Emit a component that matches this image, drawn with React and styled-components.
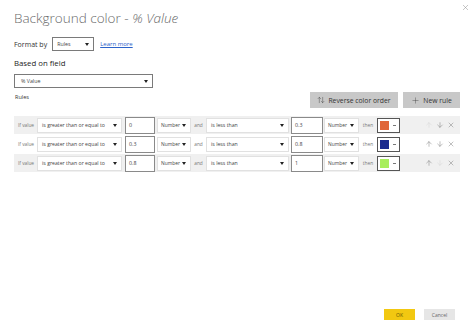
import React from 'react';
import styled, { createGlobalStyle } from 'styled-components';
import { ArrowUp, ArrowDown, X, ArrowUpDown, Plus } from 'lucide-react';

const Global = createGlobalStyle`
  html, body {
    margin: 0;
    padding: 0;
    background: #ffffff;
  }
  body {
    font-family: 'Open Sans', 'Noto Sans', sans-serif;
    color: #333;
  }
`;

const Dialog = styled.div`
  width: 474px;
  height: 335px;
  box-sizing: border-box;
  padding: 0 14px 15px 14px;
  display: flex;
  flex-direction: column;
  background: #fff;
  white-space: nowrap;
`;

const Header = styled.header`
  display: flex;
  justify-content: space-between;
  align-items: flex-start;
  height: 36px;
  margin-right: -10px;
`;

const Title = styled.h1`
  margin: 9px 0 0 0;
  font-size: 13.5px;
  font-weight: 300;
  color: #6a6a6a;
  em {
    font-style: italic;
  }
`;

const CloseBtn = styled.button`
  border: none;
  background: none;
  padding: 0;
  margin-top: 3px;
  color: #8a8a8a;
  display: flex;
`;

const FormatRow = styled.div`
  display: flex;
  align-items: center;
  gap: 5px;
  height: 16px;
  font-size: 7px;
  color: #333;
`;

const Select = styled.div`
  box-sizing: border-box;
  width: ${p => p.$w}px;
  height: ${p => p.$h || 15}px;
  display: flex;
  align-items: center;
  padding: 0 4px 0 ${p => p.$pl || 4}px;
  background: #fff;
  border: 1px solid ${p => (p.$dark ? '#7a7a7a' : '#e1e1e1')};
  font-size: ${p => p.$fs || 5.2}px;
  color: #444;
  flex-shrink: 0;
  overflow: hidden;
`;

const Caret = styled.span`
  width: 0;
  height: 0;
  flex-shrink: 0;
  margin-left: auto;
  border-left: 2px solid transparent;
  border-right: 2px solid transparent;
  border-top: 3px solid #222;
`;

const Link = styled.a`
  font-size: 6px;
  color: #2b62c9;
  text-decoration: underline;
  margin-left: 1px;
`;

const FieldLabel = styled.div`
  margin-top: 5px;
  font-size: 7.8px;
  color: #222;
  height: 17px;
  line-height: 13px;
`;

const RulesHead = styled.div`
  display: flex;
  justify-content: space-between;
  align-items: flex-start;
  margin-top: 4px;
  height: 16px;
`;

const SmallLabel = styled.span`
  font-size: 5.5px;
  color: #333;
  margin: 1px 0 0 1px;
`;

const Buttons = styled.div`
  display: flex;
  gap: 5px;
`;

const GrayButton = styled.button`
  height: 16px;
  width: ${p => p.$w}px;
  border: none;
  background: #c8c8c8;
  color: #333;
  font-family: inherit;
  font-size: 6.8px;
  display: flex;
  align-items: center;
  justify-content: center;
  gap: 3px;
  padding: 0;
`;

const Rules = styled.div`
  margin-top: 8px;
  display: flex;
  flex-direction: column;
  gap: 1px;
`;

const Row = styled.div`
  height: 18px;
  display: flex;
  align-items: center;
  background: ${p => (p.$shade ? '#f0f0f0' : '#fff')};
  padding-left: 1px;
`;

const Word = styled.span`
  font-size: 4.8px;
  color: #777;
  width: ${p => p.$w}px;
  flex-shrink: 0;
  text-align: center;
`;

const ValueInput = styled.div`
  box-sizing: border-box;
  width: ${p => p.$w}px;
  height: 17px;
  margin: 0 ${p => p.$mr || 2}px 0 ${p => p.$ml || 3}px;
  border: 1px solid #8a8a8a;
  background: #fff;
  font-size: 5.3px;
  color: #444;
  display: flex;
  align-items: center;
  padding-left: 3px;
  flex-shrink: 0;
`;

const Swatch = styled.div`
  box-sizing: border-box;
  width: 23px;
  height: 15px;
  border: 1px solid #555;
  background: #fff;
  display: flex;
  align-items: center;
  gap: 4px;
  padding-left: 2px;
  flex-shrink: 0;
`;

const Chip = styled.span`
  width: 9px;
  height: 9px;
  background: ${p => p.$c};
`;

const SmallCaret = styled.span`
  width: 3px;
  height: 1px;
  background: #777;
  margin-top: 1px;
`;

const Actions = styled.div`
  margin-left: auto;
  margin-right: 5px;
  display: flex;
  align-items: center;
  gap: 3px;
`;

const Icon = styled.span`
  display: flex;
  color: ${p => (p.$off ? '#d4d4d4' : '#777')};
`;

const Footer = styled.footer`
  margin-top: auto;
  display: flex;
  justify-content: flex-end;
  gap: 9px;
  margin-right: 5px;
`;

const FootButton = styled.button`
  width: 31px;
  height: 11px;
  border: none;
  padding: 0;
  font-family: inherit;
  font-size: 5px;
  color: ${p => (p.$primary ? '#6a5600' : '#666')};
  background: ${p => (p.$primary ? '#f2c811' : '#e6e6e6')};
`;

const rules = [
  { from: '0', to: '0.3', color: '#e0663a', up: false, down: true },
  { from: '0.3', to: '0.8', color: '#1a2a8f', up: true, down: true },
  { from: '0.8', to: '1', color: '#a8ee5c', up: true, down: false },
];

function RuleRow({ rule, shade }) {
  return (
    <Row $shade={shade}>
      <Word $w={22}>If value</Word>
      <Select $w={85}>
        is greater than or equal to <Caret />
      </Select>
      <ValueInput $w={30}>{rule.from}</ValueInput>
      <Select $w={34} $pl={3} $fs={4.9}>
        Number <Caret />
      </Select>
      <Word $w={15}>and</Word>
      <Select $w={83}>
        is less than <Caret />
      </Select>
      <ValueInput $w={32} $ml={2} $mr={1}>{rule.to}</ValueInput>
      <Select $w={35} $pl={3} $fs={4.9}>
        Number <Caret />
      </Select>
      <Word $w={18}>then</Word>
      <Swatch>
        <Chip $c={rule.color} />
        <SmallCaret />
      </Swatch>
      <Actions>
        <Icon $off={!rule.up}><ArrowUp size={8} strokeWidth={1.4} /></Icon>
        <Icon $off={!rule.down}><ArrowDown size={8} strokeWidth={1.4} /></Icon>
        <Icon><X size={8} strokeWidth={1.4} /></Icon>
      </Actions>
    </Row>
  );
}

export default function App() {
  return (
    <>
      <Global />
      <Dialog>
        <Header>
          <Title>
            Background color - <em>% Value</em>
          </Title>
          <CloseBtn aria-label="Close">
            <X size={9} strokeWidth={1.3} />
          </CloseBtn>
        </Header>
        <FormatRow>
          Format by
          <Select $w={42} $h={14} $dark $fs={5.3}>
            Rules <Caret />
          </Select>
          <Link>Learn more</Link>
        </FormatRow>
        <FieldLabel>Based on field</FieldLabel>
        <Select $w={139} $h={14} $dark $fs={5.3} $pl={6}>
          % Value <Caret />
        </Select>
        <RulesHead>
          <SmallLabel>Rules</SmallLabel>
          <Buttons>
            <GrayButton $w={88}>
              <ArrowUpDown size={8} strokeWidth={1.2} /> Reverse color order
            </GrayButton>
            <GrayButton $w={57}>
              <Plus size={9} strokeWidth={1} /> New rule
            </GrayButton>
          </Buttons>
        </RulesHead>
        <Rules>
          {rules.map((r, i) => (
            <RuleRow key={i} rule={r} shade={i !== 1} />
          ))}
        </Rules>
        <Footer>
          <FootButton $primary>OK</FootButton>
          <FootButton>Cancel</FootButton>
        </Footer>
      </Dialog>
    </>
  );
}
